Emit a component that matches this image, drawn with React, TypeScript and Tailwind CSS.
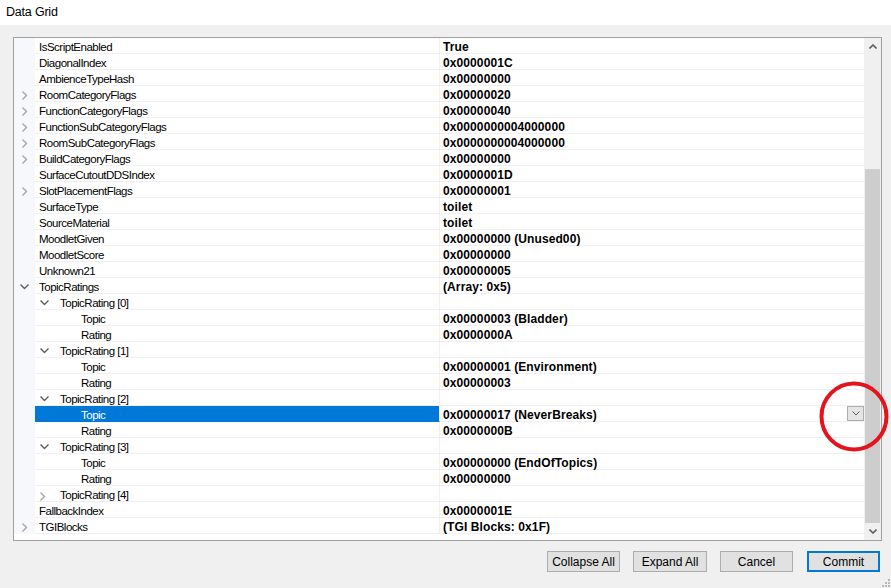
import React from 'react';

type Row = {
  name: string;
  value: string;
  level: number;
  toggle?: 'open' | 'closed';
  selected?: boolean;
};

const rows: Row[] = [
  { name: 'IsScriptEnabled', value: 'True', level: 0 },
  { name: 'DiagonalIndex', value: '0x0000001C', level: 0 },
  { name: 'AmbienceTypeHash', value: '0x00000000', level: 0 },
  { name: 'RoomCategoryFlags', value: '0x00000020', level: 0, toggle: 'closed' },
  { name: 'FunctionCategoryFlags', value: '0x00000040', level: 0, toggle: 'closed' },
  { name: 'FunctionSubCategoryFlags', value: '0x0000000004000000', level: 0, toggle: 'closed' },
  { name: 'RoomSubCategoryFlags', value: '0x0000000004000000', level: 0, toggle: 'closed' },
  { name: 'BuildCategoryFlags', value: '0x00000000', level: 0, toggle: 'closed' },
  { name: 'SurfaceCutoutDDSIndex', value: '0x0000001D', level: 0 },
  { name: 'SlotPlacementFlags', value: '0x00000001', level: 0, toggle: 'closed' },
  { name: 'SurfaceType', value: 'toilet', level: 0 },
  { name: 'SourceMaterial', value: 'toilet', level: 0 },
  { name: 'MoodletGiven', value: '0x00000000 (Unused00)', level: 0 },
  { name: 'MoodletScore', value: '0x00000000', level: 0 },
  { name: 'Unknown21', value: '0x00000005', level: 0 },
  { name: 'TopicRatings', value: '(Array: 0x5)', level: 0, toggle: 'open' },
  { name: 'TopicRating [0]', value: '', level: 1, toggle: 'open' },
  { name: 'Topic', value: '0x00000003 (Bladder)', level: 2 },
  { name: 'Rating', value: '0x0000000A', level: 2 },
  { name: 'TopicRating [1]', value: '', level: 1, toggle: 'open' },
  { name: 'Topic', value: '0x00000001 (Environment)', level: 2 },
  { name: 'Rating', value: '0x00000003', level: 2 },
  { name: 'TopicRating [2]', value: '', level: 1, toggle: 'open' },
  { name: 'Topic', value: '0x00000017 (NeverBreaks)', level: 2, selected: true },
  { name: 'Rating', value: '0x0000000B', level: 2 },
  { name: 'TopicRating [3]', value: '', level: 1, toggle: 'open' },
  { name: 'Topic', value: '0x00000000 (EndOfTopics)', level: 2 },
  { name: 'Rating', value: '0x00000000', level: 2 },
  { name: 'TopicRating [4]', value: '', level: 1, toggle: 'closed' },
  { name: 'FallbackIndex', value: '0x0000001E', level: 0 },
  { name: 'TGIBlocks', value: '(TGI Blocks: 0x1F)', level: 0, toggle: 'closed' },
];

function Chevron({ kind }: { kind: 'open' | 'closed' }) {
  if (kind === 'open') {
    return (
      <svg width="9" height="6" viewBox="0 0 9 6">
        <polyline points="0.5,0.5 4.5,4.5 8.5,0.5" fill="none" stroke="#5f5f5f" strokeWidth="1.4" />
      </svg>
    );
  }
  return (
    <svg width="6" height="9" viewBox="0 0 6 9">
      <polyline points="0.5,0.5 4.5,4.5 0.5,8.5" fill="none" stroke="#a6a6a6" strokeWidth="1.4" />
    </svg>
  );
}

function GridRow({ row }: { row: Row }) {
  // gutter holds the level 0 expander, nested levels indent inside the name cell
  const indent = row.level === 0 ? 'pl-[4px]' : row.level === 1 ? 'pl-[25px]' : 'pl-[46px]';
  return (
    <div className="flex h-[16px]">
      <div className="w-[21px] bg-[#f7f8fb] flex items-center justify-center pt-[2px]">
        {row.level === 0 && row.toggle && <Chevron kind={row.toggle} />}
      </div>
      <div
        className={`relative w-[405px] border-r border-b flex items-center ${indent} ${
          row.selected ? 'bg-[#0078d7] text-white border-b-[#0078d7] border-r-[#f0f0f0]' : 'border-[#f0f0f4] text-black'
        }`}
      >
        {row.level === 1 && row.toggle && (
          <span className="absolute left-[5px] top-[6px] flex">
            <Chevron kind={row.toggle} />
          </span>
        )}
        <span className="relative top-[2px] leading-[15px] text-[11.5px] tracking-[-0.5px]">{row.name}</span>
      </div>
      <div className="w-[424px] border-b border-[#f0f0f4] flex items-center pl-[3px] relative">
        <span className="relative top-[2px] leading-[15px] text-[12px] font-bold tracking-[0.1px]">{row.value}</span>
        {row.selected && (
          <span className="absolute right-0 top-0 w-[17px] h-[15px] bg-[#e5e5e5] border border-[#adadad] flex items-center justify-center">
            <svg width="8" height="5" viewBox="0 0 8 5">
              <polyline points="0.5,0.5 4,4 7.5,0.5" fill="none" stroke="#606060" strokeWidth="1" />
            </svg>
          </span>
        )}
      </div>
    </div>
  );
}

function Btn({ label, primary, w }: { label: string; primary?: boolean; w: string }) {
  return (
    <button
      className={`${w} h-[21px] text-[12px] bg-[#e1e1e1] text-black flex items-center justify-center ${
        primary ? 'border-2 border-[#0078d7]' : 'border border-[#adadad]'
      }`}
    >
      {label}
    </button>
  );
}

export default function App() {
  return (
    <div
      className="w-[891px] h-[588px] bg-[#f0f0f0] flex flex-col relative overflow-hidden"
      style={{ fontFamily: '"Liberation Sans", Arial, sans-serif' }}
    >
      <div className="h-[25px] bg-white pl-[6px] flex items-center text-[12.5px] text-black tracking-[-0.2px]">Data Grid</div>
      <div className="pl-[13px] pt-[12px]">
        <div className="w-[869px] h-[504px] border border-[#a0a0a0] bg-white flex">
          <div className="flex flex-col">
            {rows.map((r, i) => (
              <GridRow key={i} row={r} />
            ))}
          </div>
          <div className="w-[17px] bg-[#f0f0f0] flex flex-col">
            <div className="h-[17px] flex items-center justify-center">
              <svg width="8" height="5" viewBox="0 0 8 5">
                <polyline points="0.5,4.5 4,1 7.5,4.5" fill="none" stroke="#606060" strokeWidth="1.6" />
              </svg>
            </div>
            <div className="flex-1 flex flex-col">
              <div className="h-[114px]" />
              <div className="flex-1 bg-[#cdcdcd] mx-[1px]" />
            </div>
            <div className="h-[17px] flex items-center justify-center">
              <svg width="8" height="5" viewBox="0 0 8 5">
                <polyline points="0.5,0.5 4,4 7.5,0.5" fill="none" stroke="#606060" strokeWidth="1.6" />
              </svg>
            </div>
          </div>
        </div>
      </div>
      <div className="flex justify-end pr-[11px] pt-[10px]">
        <Btn label="Collapse All" w="w-[73px]" />
        <div className="w-[13px]" />
        <Btn label="Expand All" w="w-[74px]" />
        <div className="w-[13px]" />
        <Btn label="Cancel" w="w-[73px]" />
        <div className="w-[14px]" />
        <Btn label="Commit" primary w="w-[73px]" />
      </div>
      <svg className="absolute right-[1px] bottom-[1px]" width="8" height="8" viewBox="0 0 8 8">
        <rect x="6" y="0" width="2" height="2" fill="#b8b8b8" />
        <rect x="3" y="3" width="2" height="2" fill="#b8b8b8" />
        <rect x="6" y="3" width="2" height="2" fill="#b8b8b8" />
        <rect x="0" y="6" width="2" height="2" fill="#b8b8b8" />
        <rect x="3" y="6" width="2" height="2" fill="#b8b8b8" />
        <rect x="6" y="6" width="2" height="2" fill="#b8b8b8" />
      </svg>
      <svg className="absolute left-[819px] top-[381px]" width="71" height="72" viewBox="0 0 71 72">
        <ellipse cx="35" cy="35.5" rx="32.5" ry="33" fill="none" stroke="#e5141c" strokeWidth="4" />
      </svg>
    </div>
  );
}
